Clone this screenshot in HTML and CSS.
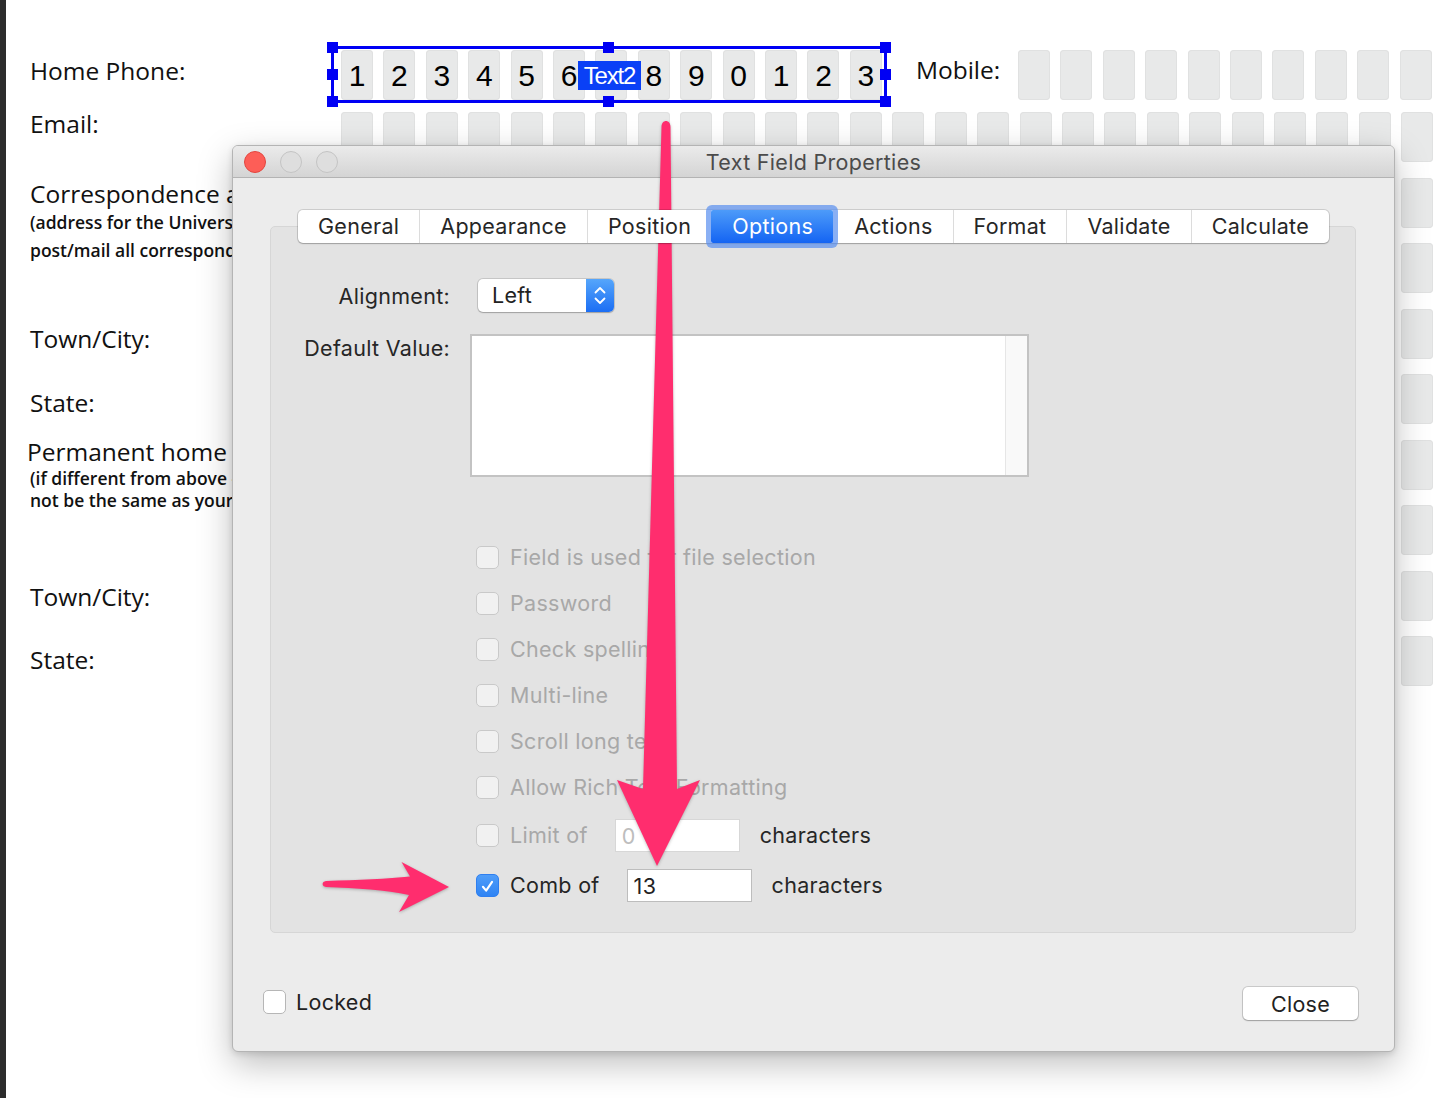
FILE: index.html
```html
<!DOCTYPE html>
<html lang="en">
<head>
<meta charset="utf-8">
<title>Text Field Properties</title>
<link rel="stylesheet" href="styles.css">
</head>
<body>
<div class="screen">
  <div class="edge"></div>
  <main class="form">
    <div class="labels">
      <div class="lbl lbl-home">Home Phone:</div>
      <div class="lbl lbl-email">Email:</div>
      <div class="lbl lbl-corr">Correspondence address:</div>
      <div class="note note-corr">(address for the University to<br>post/mail all correspondence)</div>
      <div class="lbl lbl-town1">Town/City:</div>
      <div class="lbl lbl-state1">State:</div>
      <div class="lbl lbl-perm">Permanent home address:</div>
      <div class="note note-perm">(if different from above – this may<br>not be the same as your correspondence address)</div>
      <div class="lbl lbl-town2">Town/City:</div>
      <div class="lbl lbl-state2">State:</div>
    </div>
    <div class="fields">
      <div class="row row-first">
        <div class="comb comb-sel">
          <span class="box">1</span><span class="box">2</span><span class="box">3</span><span class="box">4</span><span class="box">5</span><span class="box">6</span><span class="box"></span><span class="box">8</span><span class="box">9</span><span class="box">0</span><span class="box">1</span><span class="box">2</span><span class="box">3</span>
          <div class="ring">
            <i class="h h-tl"></i><i class="h h-tm"></i><i class="h h-tr"></i>
            <i class="h h-ml"></i><i class="h h-mr"></i>
            <i class="h h-bl"></i><i class="h h-bm"></i><i class="h h-br"></i>
          </div>
          <div class="tag">Text2</div>
        </div>
        <div class="mobile">Mobile:</div>
        <div class="comb">
          <span class="box"></span><span class="box"></span><span class="box"></span><span class="box"></span><span class="box"></span><span class="box"></span><span class="box"></span><span class="box"></span><span class="box"></span><span class="box"></span>
        </div>
      </div>
      <div class="row comb">
        <span class="box"></span><span class="box"></span><span class="box"></span><span class="box"></span><span class="box"></span><span class="box"></span><span class="box"></span><span class="box"></span><span class="box"></span><span class="box"></span><span class="box"></span><span class="box"></span><span class="box"></span><span class="box"></span><span class="box"></span><span class="box"></span><span class="box"></span><span class="box"></span><span class="box"></span><span class="box"></span><span class="box"></span><span class="box"></span><span class="box"></span><span class="box"></span><span class="box"></span><span class="box"></span>
      </div>
      <div class="row comb">
        <span class="box"></span><span class="box"></span><span class="box"></span><span class="box"></span><span class="box"></span><span class="box"></span><span class="box"></span><span class="box"></span><span class="box"></span><span class="box"></span><span class="box"></span><span class="box"></span><span class="box"></span><span class="box"></span><span class="box"></span><span class="box"></span><span class="box"></span><span class="box"></span><span class="box"></span><span class="box"></span><span class="box"></span><span class="box"></span><span class="box"></span><span class="box"></span><span class="box"></span><span class="box"></span>
      </div>
      <div class="row comb">
        <span class="box"></span><span class="box"></span><span class="box"></span><span class="box"></span><span class="box"></span><span class="box"></span><span class="box"></span><span class="box"></span><span class="box"></span><span class="box"></span><span class="box"></span><span class="box"></span><span class="box"></span><span class="box"></span><span class="box"></span><span class="box"></span><span class="box"></span><span class="box"></span><span class="box"></span><span class="box"></span><span class="box"></span><span class="box"></span><span class="box"></span><span class="box"></span><span class="box"></span><span class="box"></span>
      </div>
      <div class="row comb">
        <span class="box"></span><span class="box"></span><span class="box"></span><span class="box"></span><span class="box"></span><span class="box"></span><span class="box"></span><span class="box"></span><span class="box"></span><span class="box"></span><span class="box"></span><span class="box"></span><span class="box"></span><span class="box"></span><span class="box"></span><span class="box"></span><span class="box"></span><span class="box"></span><span class="box"></span><span class="box"></span><span class="box"></span><span class="box"></span><span class="box"></span><span class="box"></span><span class="box"></span><span class="box"></span>
      </div>
      <div class="row comb">
        <span class="box"></span><span class="box"></span><span class="box"></span><span class="box"></span><span class="box"></span><span class="box"></span><span class="box"></span><span class="box"></span><span class="box"></span><span class="box"></span><span class="box"></span><span class="box"></span><span class="box"></span><span class="box"></span><span class="box"></span><span class="box"></span><span class="box"></span><span class="box"></span><span class="box"></span><span class="box"></span><span class="box"></span><span class="box"></span><span class="box"></span><span class="box"></span><span class="box"></span><span class="box"></span>
      </div>
      <div class="row comb">
        <span class="box"></span><span class="box"></span><span class="box"></span><span class="box"></span><span class="box"></span><span class="box"></span><span class="box"></span><span class="box"></span><span class="box"></span><span class="box"></span><span class="box"></span><span class="box"></span><span class="box"></span><span class="box"></span><span class="box"></span><span class="box"></span><span class="box"></span><span class="box"></span><span class="box"></span><span class="box"></span><span class="box"></span><span class="box"></span><span class="box"></span><span class="box"></span><span class="box"></span><span class="box"></span>
      </div>
      <div class="row comb">
        <span class="box"></span><span class="box"></span><span class="box"></span><span class="box"></span><span class="box"></span><span class="box"></span><span class="box"></span><span class="box"></span><span class="box"></span><span class="box"></span><span class="box"></span><span class="box"></span><span class="box"></span><span class="box"></span><span class="box"></span><span class="box"></span><span class="box"></span><span class="box"></span><span class="box"></span><span class="box"></span><span class="box"></span><span class="box"></span><span class="box"></span><span class="box"></span><span class="box"></span><span class="box"></span>
      </div>
      <div class="row comb">
        <span class="box"></span><span class="box"></span><span class="box"></span><span class="box"></span><span class="box"></span><span class="box"></span><span class="box"></span><span class="box"></span><span class="box"></span><span class="box"></span><span class="box"></span><span class="box"></span><span class="box"></span><span class="box"></span><span class="box"></span><span class="box"></span><span class="box"></span><span class="box"></span><span class="box"></span><span class="box"></span><span class="box"></span><span class="box"></span><span class="box"></span><span class="box"></span><span class="box"></span><span class="box"></span>
      </div>
      <div class="row comb">
        <span class="box"></span><span class="box"></span><span class="box"></span><span class="box"></span><span class="box"></span><span class="box"></span><span class="box"></span><span class="box"></span><span class="box"></span><span class="box"></span><span class="box"></span><span class="box"></span><span class="box"></span><span class="box"></span><span class="box"></span><span class="box"></span><span class="box"></span><span class="box"></span><span class="box"></span><span class="box"></span><span class="box"></span><span class="box"></span><span class="box"></span><span class="box"></span><span class="box"></span><span class="box"></span>
      </div>
    </div>
  </main>

  <section class="window">
    <header class="titlebar">
      <div class="lights"><i class="light light-red"></i><i class="light"></i><i class="light"></i></div>
      <div class="title">Text Field Properties</div>
      <div></div>
    </header>
    <div class="wbody">
      <nav class="tabs">
        <span class="tab">General</span>
        <span class="tab">Appearance</span>
        <span class="tab">Position</span>
        <span class="tab tab-active">Options</span>
        <span class="tab">Actions</span>
        <span class="tab">Format</span>
        <span class="tab">Validate</span>
        <span class="tab">Calculate</span>
      </nav>
      <div class="panel">
        <div class="fgrid">
          <span class="flabel">Alignment:</span>
          <div class="popup">
            <span class="popup-val">Left</span>
            <span class="stepper"><svg width="28" height="33" viewBox="0 0 28 33"><path d="M9.5 13.5 L14 9 L18.5 13.5 M9.5 19.5 L14 24 L18.5 19.5" fill="none" stroke="#fff" stroke-width="1.8" stroke-linecap="round" stroke-linejoin="round"/></svg></span>
          </div>
          <span class="flabel flabel-top">Default Value:</span>
          <div class="textarea"><div class="tscroll"></div></div>
        </div>
        <ul class="opts">
          <li class="opt off"><span class="cb"></span><span class="olbl">Field is used for file selection</span></li>
          <li class="opt off"><span class="cb"></span><span class="olbl">Password</span></li>
          <li class="opt off"><span class="cb"></span><span class="olbl">Check spelling</span></li>
          <li class="opt off"><span class="cb"></span><span class="olbl">Multi-line</span></li>
          <li class="opt off"><span class="cb"></span><span class="olbl">Scroll long text</span></li>
          <li class="opt off"><span class="cb"></span><span class="olbl">Allow Rich Text Formatting</span></li>
          <li class="opt opt-limit"><span class="cb"></span><span class="olbl olbl-off">Limit of</span><span class="inp inp-off">0</span><span class="chars">characters</span></li>
          <li class="opt opt-comb"><span class="cb cb-on"><svg width="23" height="23" viewBox="0 0 23 23"><path d="M6.5 11.8 L10 16 L16.5 6.5" fill="none" stroke="#fff" stroke-width="2.3" stroke-linecap="round" stroke-linejoin="round"/></svg></span><span class="olbl">Comb of</span><span class="inp">13</span><span class="chars">characters</span></li>
        </ul>
      </div>
      <footer class="wfoot">
        <div class="locked"><span class="cb cb-white"></span><span>Locked</span></div>
        <button class="btn" type="button">Close</button>
      </footer>
    </div>
  </section>

  <svg class="arrows" width="1438" height="1098" viewBox="0 0 1438 1098">
    <path d="M661.5 127 C661.5 119 670.5 119 670.5 127 L677 789 L700 780 L657 866 L617 780 L643 789 Z" fill="#ff2d6e"/>
    <path d="M326 881 C358 880 388 879 410 876.5 L401.5 862 L449 887 L399 912 L409 895 C386 890 356 888 326 887 C321.5 886.5 321.5 881.5 326 881 Z" fill="#ff2d6e"/>
  </svg>
</div>
</body>
</html>
```

FILE: styles.css
```css
* { box-sizing: border-box; }
html, body { margin: 0; padding: 0; }
body {
  width: 1438px;
  height: 1098px;
  overflow: hidden;
  background: #fff;
  font-family: "Open Sans", "DejaVu Sans", sans-serif;
}
.screen {
  position: relative;
  width: 1438px;
  height: 1098px;
  display: flex;
  overflow: hidden;
  background: #fff;
}
.edge { width: 6px; flex: none; background: #2c2c2c; }
.form { flex: 1; display: flex; padding-left: 24px; min-width: 0; }

/* page labels */
.labels { width: 311px; flex: none; color: #111; white-space: nowrap; }
.lbl { font-size: 24.5px; line-height: 30px; }
.note { font-size: 17.5px; font-weight: 600; }
.note-corr { line-height: 28px; margin-top: -0.3px; }
.note-perm { line-height: 22px; margin-top: 0.7px; }
.lbl-home { margin-top: 55.5px; }
.lbl-email { margin-top: 23px; }
.lbl-corr { margin-top: 40px; }
.lbl-town1 { margin-top: 59.3px; }
.lbl-state1 { margin-top: 34px; }
.lbl-perm { margin-top: 19px; margin-left: -3px; }
.lbl-town2 { margin-top: 71.3px; }
.lbl-state2 { margin-top: 33px; }

/* comb fields */
.fields { display: flex; flex-direction: column; padding-top: 50px; gap: 15.5px; }
.row { display: flex; height: 50px; flex: none; }
.row-first { margin-bottom: -3.5px; }
.comb { display: flex; gap: 10.42px; }
.box {
  width: 32px;
  height: 50px;
  flex: none;
  background: #e8e9e9;
  border-radius: 4px;
  box-shadow: inset 0 0 0 1px #e0e1e1;
  font: 30px/52px "Liberation Sans", Arial, sans-serif;
  text-align: center;
  color: #000;
}
.comb-sel { position: relative; }
.ring {
  position: absolute;
  top: -4px; bottom: -3px; left: -10px; right: -5px;
  border: 3px solid #0000f4;
}
.h { position: absolute; width: 11px; height: 11px; background: #0000f4; }
.h-tl { left: -7px; top: -7px; }
.h-tm { left: calc(50% - 5.5px); top: -7px; }
.h-tr { right: -7px; top: -7px; }
.h-ml { left: -7px; top: calc(50% - 5.5px); }
.h-mr { right: -7px; top: calc(50% - 5.5px); }
.h-bl { left: -7px; bottom: -7px; }
.h-bm { left: calc(50% - 5.5px); bottom: -7px; }
.h-br { right: -7px; bottom: -7px; }
.tag {
  position: absolute;
  left: 237px; top: 11px;
  width: 63px; height: 29px;
  background: #0a40f6;
  color: #fff;
  font: 24px/30px "Liberation Sans", Arial, sans-serif;
  letter-spacing: -1.2px;
  text-align: center;
}
.mobile {
  font-size: 24.5px;
  line-height: 30px;
  color: #111;
  margin: 4.5px 0 0 34px;
  width: 102px;
  flex: none;
}

/* dialog window */
.window {
  position: absolute;
  left: 232px; top: 145px;
  width: 1163px; height: 907px;
  background: #ececec;
  border: 1px solid #b4b4b4;
  border-radius: 6px;
  box-shadow: 0 12px 34px rgba(0,0,0,.26), 0 2px 6px rgba(0,0,0,.12);
  display: flex;
  flex-direction: column;
  font-family: Inter, "Helvetica Neue", "Liberation Sans", sans-serif;
  font-size: 21.5px;
  letter-spacing: 0.3px;
  color: #252525;
  overflow: hidden;
}
.titlebar {
  height: 32px;
  flex: none;
  display: grid;
  grid-template-columns: 1fr auto 1fr;
  align-items: center;
  padding: 0 11px;
  background: linear-gradient(#ebebeb, #d4d4d4);
  border-bottom: 1px solid #b3b3b3;
}
.lights { display: flex; gap: 14px; }
.light {
  width: 22px; height: 22px;
  border-radius: 50%;
  background: #dedede;
  border: 1px solid #c4c4c4;
}
.light-red { background: #fd5e57; border-color: #e2463f; }
.title { font-size: 21.5px; color: #4b4b4b; line-height: 30px; }

.wbody { flex: 1; display: flex; flex-direction: column; padding-top: 32px; }
.tabs {
  align-self: center;
  display: flex;
  height: 33px;
  background: #fff;
  border-radius: 5px;
  box-shadow: 0 0 0 1px rgba(0,0,0,.13), 0 1px 1.5px rgba(0,0,0,.2);
  position: relative;
  z-index: 1;
}
.tab {
  padding: 0 20px;
  line-height: 33px;
  border-left: 1px solid #dcdcdc;
  color: #262626;
}
.tab:first-child { border-left: none; }
.tab-active {
  position: relative;
  border-left-color: transparent;
  background: linear-gradient(#4d9bf9, #1464f3);
  color: #fff;
  border-radius: 2px;
  box-shadow: 0 0 0 5px rgba(88,142,240,.7);
}
.tab-active + .tab { border-left-color: transparent; }

.panel {
  margin: -17px 38px 0 37px;
  background: #e3e3e3;
  border: 1px solid #d6d6d6;
  border-radius: 5px;
  padding: 52px 0 24px;
}
.fgrid {
  display: grid;
  grid-template-columns: 179px auto;
  column-gap: 20px;
  row-gap: 22px;
  justify-content: start;
}
.flabel { text-align: right; align-self: center; color: #262626; }
.flabel-top { align-self: start; line-height: 28px; }
.popup {
  margin-left: 8px;
  width: 136px; height: 33px;
  display: flex;
  background: #fff;
  border-radius: 5px;
  box-shadow: 0 0 0 1px rgba(0,0,0,.12), 0 1px 1.5px rgba(0,0,0,.2);
}
.popup-val { flex: 1; line-height: 33px; padding-left: 14px; color: #222; }
.stepper {
  width: 28px; height: 33px;
  border-radius: 0 5px 5px 0;
  background: linear-gradient(#56a6fb, #1b6ef4);
  display: flex;
}
.textarea {
  width: 559px; height: 143px;
  background: #fff;
  border: 2px solid #c3c3c3;
  display: flex;
  justify-content: flex-end;
}
.tscroll { width: 22px; background: #f9f9f9; border-left: 1px solid #e6e6e6; }

.opts { list-style: none; margin: 57px 0 0; padding: 0 0 0 205px; }
.opt { display: flex; align-items: center; height: 46px; }
.opt-limit { margin-top: 2px; }
.opt-comb { margin-top: 4px; }
.cb {
  width: 23px; height: 23px;
  flex: none;
  border-radius: 5px;
  background: #f1f1f1;
  border: 1px solid #c9c9c9;
  display: flex;
}
.cb-on { background: linear-gradient(#4f9df9, #2f84f4); border-color: #2f7ff0; }
.olbl { margin-left: 11px; color: #252525; }
.off .olbl, .olbl-off { color: #a8a8a8; }
.inp {
  margin-left: 27px;
  width: 125px; height: 33px;
  background: #fff;
  border: 1px solid #bdbdbd;
  line-height: 33px;
  padding-left: 6px;
  color: #222;
}
.inp-off { border-color: #d7d7d7; color: #bdbdbd; }
.chars { margin-left: 20px; color: #262626; }

.wfoot {
  margin-top: 54px;
  padding: 0 36px 0 30px;
  display: flex;
  justify-content: space-between;
  align-items: flex-start;
}
.locked { display: flex; align-items: center; gap: 10px; color: #222; margin-top: 2px; }
.cb-white { background: #fff; border-color: #b6b6b6; height: 24px; }
.btn {
  width: 115px; height: 33px;
  background: #fff;
  border: none;
  border-radius: 5px;
  box-shadow: 0 0 0 1px rgba(0,0,0,.14), 0 1px 1.5px rgba(0,0,0,.22);
  font-family: inherit;
  font-size: inherit;
  letter-spacing: inherit;
  color: #222;
  padding: 0;
}

/* annotation arrows */
.arrows {
  position: absolute;
  left: 0; top: 0;
  pointer-events: none;
  filter: drop-shadow(0 1px 1.5px rgba(0,0,0,.25));
}
```
